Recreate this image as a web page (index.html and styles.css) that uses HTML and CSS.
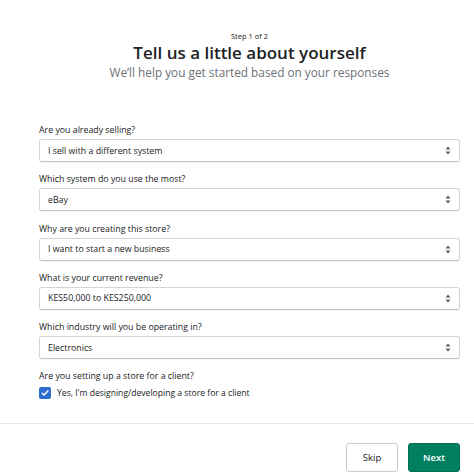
FILE: index.html
```html
<!DOCTYPE html>
<html>
<head>
<meta charset="utf-8">
<link rel="stylesheet" href="styles.css">
</head>
<body>
<div class="page">
  <header class="head">
    <div class="step">Step 1 of 2</div>
    <h1 class="title">Tell us a little about yourself</h1>
    <p class="sub">We’ll help you get started based on your responses</p>
  </header>
  <form class="form">
    <div class="field">
      <div class="label">Are you already selling?</div>
      <div class="select"><span>I sell with a different system</span><svg class="arrows" width="6" height="9" viewBox="0 0 6 9"><path d="M3 0.5 L5.5 3.5 H0.5 Z M3 8.5 L5.5 5.5 H0.5 Z" fill="#5c5f62"/></svg></div>
    </div>
    <div class="field">
      <div class="label">Which system do you use the most?</div>
      <div class="select"><span>eBay</span><svg class="arrows" width="6" height="9" viewBox="0 0 6 9"><path d="M3 0.5 L5.5 3.5 H0.5 Z M3 8.5 L5.5 5.5 H0.5 Z" fill="#5c5f62"/></svg></div>
    </div>
    <div class="field">
      <div class="label">Why are you creating this store?</div>
      <div class="select"><span>I want to start a new business</span><svg class="arrows" width="6" height="9" viewBox="0 0 6 9"><path d="M3 0.5 L5.5 3.5 H0.5 Z M3 8.5 L5.5 5.5 H0.5 Z" fill="#5c5f62"/></svg></div>
    </div>
    <div class="field">
      <div class="label">What is your current revenue?</div>
      <div class="select"><span>KES50,000 to KES250,000</span><svg class="arrows" width="6" height="9" viewBox="0 0 6 9"><path d="M3 0.5 L5.5 3.5 H0.5 Z M3 8.5 L5.5 5.5 H0.5 Z" fill="#5c5f62"/></svg></div>
    </div>
    <div class="field">
      <div class="label">Which industry will you be operating in?</div>
      <div class="select"><span>Electronics</span><svg class="arrows" width="6" height="9" viewBox="0 0 6 9"><path d="M3 0.5 L5.5 3.5 H0.5 Z M3 8.5 L5.5 5.5 H0.5 Z" fill="#5c5f62"/></svg></div>
    </div>
    <div class="field">
      <div class="label">Are you setting up a store for a client?</div>
      <div class="check-row">
        <span class="checkbox"><svg width="12" height="12" viewBox="0 0 12 12"><path d="M3.2 6.2 L5.1 8 L8.9 4" fill="none" stroke="#fff" stroke-width="1.5" stroke-linecap="round" stroke-linejoin="round"/></svg></span>
        <span class="check-text">Yes, I'm designing/developing a store for a client</span>
      </div>
    </div>
  </form>
  <footer class="foot">
    <button type="button" class="btn skip">Skip</button>
    <button type="button" class="btn next">Next</button>
  </footer>
</div>
</body>
</html>
```
FILE: styles.css
```css
* { box-sizing: border-box; }
html, body { margin: 0; padding: 0; background: #fff; }
body {
  font-family: "Open Sans", "Noto Sans", sans-serif;
  color: #202223;
}
.page { width: 474px; }
.head {
  padding-top: 31px;
  width: 421px;
  margin-left: 39px;
  text-align: center;
}
.step {
  font-size: 7.5px;
  line-height: 10px;
  color: #202223;
}
.title {
  margin: 0;
  font-size: 17px;
  line-height: 23px;
  font-weight: 600;
  color: #202223;
}
.sub {
  margin: 0;
  font-size: 11.8px;
  line-height: 16px;
  color: #6d7175;
}
.form {
  margin: 43px 0 0 39px;
  width: 421px;
  display: flex;
  flex-direction: column;
  gap: 10.3px;
}
.field { display: flex; flex-direction: column; gap: 2px; }
.label {
  font-size: 8.8px;
  line-height: 14px;
  color: #202223;
}
.select {
  height: 23px;
  border: 1px solid #d2d5d8;
  border-bottom-color: #c0c4c8;
  border-radius: 3px;
  display: flex;
  align-items: center;
  justify-content: space-between;
  padding: 0 8px 0 8px;
  font-size: 8.8px;
  color: #202223;
  box-shadow: 0 1px 0 rgba(0,0,0,0.03);
}
.arrows { display: block; }
.check-row {
  display: flex;
  align-items: center;
  gap: 6px;
  height: 14px;
  margin-top: 1px;
}
.checkbox {
  width: 12px;
  height: 12px;
  border-radius: 2px;
  background: #2c6ecb;
  display: flex;
}
.check-text { font-size: 8.6px; color: #202223; }
.foot {
  margin-top: 23px;
  border-top: 1px solid #e4e5e7;
  padding: 19px 14px 0 0;
  display: flex;
  justify-content: flex-end;
  gap: 10px;
}
.btn {
  width: 52px;
  height: 29px;
  border-radius: 3px;
  font-family: "Open Sans", "Noto Sans", sans-serif;
  font-size: 9.5px;
  padding: 0;
  cursor: pointer;
}
.skip {
  background: #fff;
  border: 1px solid #c9cccf;
  color: #202223;
}
.next {
  background: #008060;
  border: 1px solid #006e52;
  color: #fff;
  font-weight: 600;
}
```
